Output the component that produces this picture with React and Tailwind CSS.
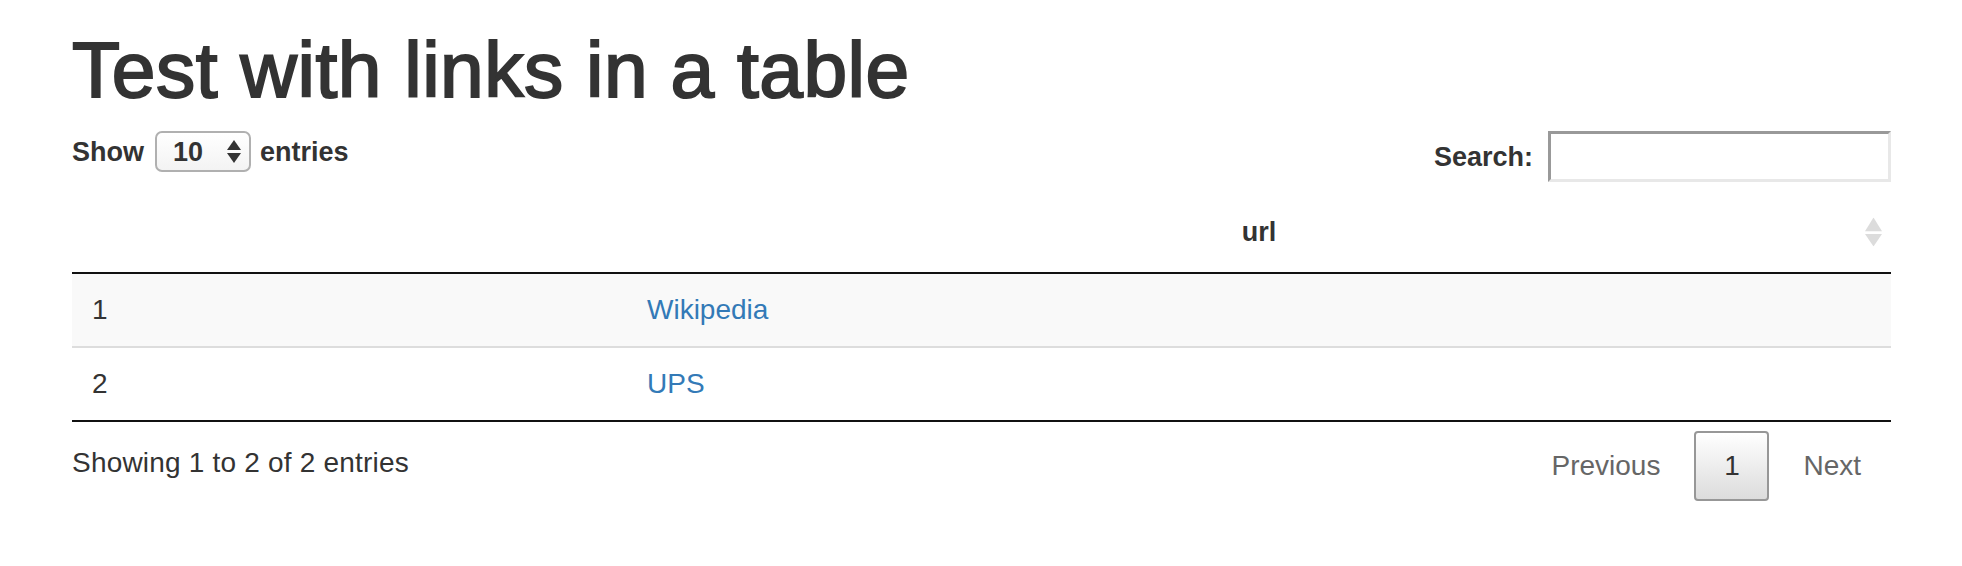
import React from 'react';

const rows = [
  { id: 1, name: 'Wikipedia' },
  { id: 2, name: 'UPS' },
];

const SortBoth = () => (
  <svg width="17" height="29" viewBox="0 0 17 29" className="absolute right-[9px] top-1/2 -translate-y-1/2">
    <polygon points="0,13.7 8.5,0 17,13.7" fill="#dcdcdc" />
    <polygon points="0,16.5 17,16.5 8.5,29" fill="#dcdcdc" />
  </svg>
);

const App = () => {
  return (
    <div className="min-h-[566px] bg-white pl-[72px] pr-[71px] text-[#333] font-['Liberation_Sans',Arial,sans-serif]">
      <h1 className="pt-[27px] text-[78.5px] leading-[87px] font-normal tracking-[0.5px] [-webkit-text-stroke:2px_#333]">
        Test with links in a table
      </h1>

      <div className="mt-[17px] flex items-start justify-between">
        <label className="flex h-[41px] items-center text-[27px] font-bold leading-[40px]">
          <span className="mr-[11px]">Show</span>
          <div className="flex h-[41px] w-[96px] items-center justify-between rounded-[7px] border-2 border-[#b0b0b0] bg-gradient-to-b from-white to-[#f3f3f3] pl-[16px] pr-[8px]">
            <span>10</span>
            <svg width="14" height="23" viewBox="0 0 14 23">
              <polygon points="0,10 7,0 14,10" fill="#333" />
              <polygon points="0,13 14,13 7,23" fill="#333" />
            </svg>
          </div>
          <span className="ml-[9px]">entries</span>
        </label>

        <label className="flex h-[51px] items-center text-[27px] font-bold leading-[40px]">
          <span className="mr-[15px]">Search:</span>
          <input
            type="text"
            className="h-[51px] w-[343px] border-[3px] border-t-[#999] border-l-[#999] border-r-[#e8e8e8] border-b-[#e8e8e8] bg-white outline-none"
          />
        </label>
      </div>

      <table className="mt-[10px] w-full table-fixed border-separate border-spacing-0 text-[28px] leading-[40px]">
        <colgroup>
          <col className="w-[555px]" />
          <col />
        </colgroup>
        <thead>
          <tr>
            <th className="border-b-2 border-[#111] py-[20px] pl-[20px]"></th>
            <th className="relative border-b-2 border-[#111] px-[20px] py-[20px] text-center text-[27px] font-bold">
              url
              <SortBoth />
            </th>
          </tr>
        </thead>
        <tbody>
          {rows.map((r, i) => {
            const first = i === 0;
            const last = i === rows.length - 1;
            const cls = [
              'px-[20px] py-[16px] text-left font-normal',
              first ? 'bg-[#f9f9f9]' : 'bg-white border-t-2 border-t-[#ddd]',
              last ? 'border-b-2 border-b-[#111]' : '',
            ].join(' ');
            return (
              <tr key={r.id}>
                <td className={cls}>{r.id}</td>
                <td className={cls}>
                  <a href="#" className="text-[#337ab7]">{r.name}</a>
                </td>
              </tr>
            );
          })}
        </tbody>
      </table>

      <div className="flex items-start justify-between">
        <div className="pt-[21px] text-[28px] leading-[40px] tracking-[0.2px]">Showing 1 to 2 of 2 entries</div>
        <div className="flex items-center gap-[6px] pt-[9px] pr-[2px] text-[28px] leading-[40px]">
          <span className="px-[28px] text-[#666]">Previous</span>
          <span className="flex h-[70px] w-[75px] items-center justify-center rounded-[4px] border-2 border-[#979797] bg-gradient-to-b from-white to-[#dcdcdc] text-[#333]">
            1
          </span>
          <span className="px-[28px] text-[#666]">Next</span>
        </div>
      </div>
    </div>
  );
};

export default App;
